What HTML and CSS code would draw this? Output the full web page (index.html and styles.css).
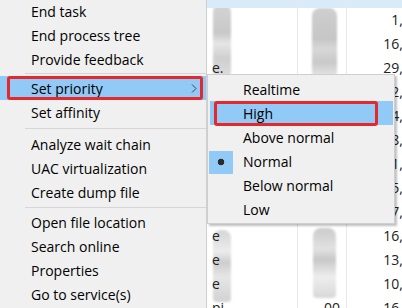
FILE: index.html
```html
<!DOCTYPE html>
<html lang="en">
<head>
  <meta charset="UTF-8"/>
  <title>Task Manager - Set priority</title>
  <link rel="stylesheet" href="styles.css">
</head>
<body>
  <div class="screen">

    <div class="smudge top-a"></div>
    <div class="smudge top-b"></div>
    <div class="smudge bot-a"></div>
    <div class="smudge bot-b"></div>

    <div class="table">
      <div class="row selected"><div></div><div class="name"></div><div class="cell"></div><div class="cell num"></div></div>
      <div class="row"><div></div><div class="name"></div><div class="cell"></div><div class="cell num">1,</div></div>
      <div class="row"><div></div><div class="name"></div><div class="cell"></div><div class="cell num">16,</div></div>
      <div class="row"><div></div><div class="name">e.</div><div class="cell"></div><div class="cell num">29,</div></div>
      <div class="row"><div></div><div class="name"></div><div class="cell"></div><div class="cell num">12,</div></div>
      <div class="row"><div></div><div class="name"></div><div class="cell"></div><div class="cell num">14,</div></div>
      <div class="row"><div></div><div class="name"></div><div class="cell"></div><div class="cell num">18,</div></div>
      <div class="row"><div></div><div class="name"></div><div class="cell"></div><div class="cell num">11,</div></div>
      <div class="row"><div></div><div class="name"></div><div class="cell"></div><div class="cell num">15,</div></div>
      <div class="row"><div></div><div class="name"></div><div class="cell"></div><div class="cell num">17,</div></div>
      <div class="row"><div></div><div class="name">e</div><div class="cell"></div><div class="cell num">16,</div></div>
      <div class="row"><div></div><div class="name">e</div><div class="cell"></div><div class="cell num">13,</div></div>
      <div class="row"><div></div><div class="name">e</div><div class="cell"></div><div class="cell num">10,</div></div>
      <div class="row"><div></div><div class="name">pi</div><div class="cell">00</div><div class="cell num">16,</div></div>
    </div>

    <ul class="menu main">
      <li class="item">End task</li>
      <li class="item">End process tree</li>
      <li class="item">Provide feedback</li>
      <li class="sep sep-1"></li>
      <li class="item active mark">Set priority
        <svg class="arrow" width="6" height="9" viewBox="0 0 6 9"><polyline points="1,0.5 5,4.5 1,8.5" fill="none" stroke="#444" stroke-width="1"/></svg>
      </li>
      <li class="item">Set affinity</li>
      <li class="sep sep-2"></li>
      <li class="item">Analyze wait chain</li>
      <li class="item">UAC virtualization</li>
      <li class="item">Create dump file</li>
      <li class="sep sep-3"></li>
      <li class="item">Open file location</li>
      <li class="item">Search online</li>
      <li class="item">Properties</li>
      <li class="item">Go to service(s)</li>
    </ul>

    <ul class="menu sub">
      <li class="item">Realtime</li>
      <li class="item active mark">High</li>
      <li class="item">Above normal</li>
      <li class="item checked">Normal</li>
      <li class="item">Below normal</li>
      <li class="item">Low</li>
    </ul>

  </div>
</body>
</html>
```

FILE: styles.css
```css
body {
  margin: 0;
  font-family: 'Open Sans', 'Noto Sans', sans-serif;
  font-size: 14px;
  color: #000;
}
.screen {
  position: relative;
  width: 402px;
  height: 308px;
  overflow: hidden;
  background: #fff;
}

/* table behind the menus */
.table {
  position: relative;
  margin-top: -16px;
}
.row {
  display: grid;
  grid-template-columns: 210px 87px 49px 56px;
  height: 24px;
  line-height: 24px;
}
.row.selected {
  background: #d9ebf9;
}
.name {
  padding-left: 2px;
  color: #222;
}
.cell {
  border-left: 1px solid #e8e8e8;
  text-align: right;
  padding-right: 6px;
  color: #222;
}
.num {
  padding-right: 0;
  margin-right: -1px;
}

.smudge {
  position: absolute;
  border-radius: 8px 8px 4px 4px;
  filter: blur(1px);
}
.top-a {
  left: 213px; top: 4px; width: 18px; height: 72px;
  background: linear-gradient(#d4d4d4, #c8c8c8 40%, #e6e6e6 55%, #cfcfcf 75%, #dcdcdc);
}
.top-b {
  left: 312px; top: 8px; width: 25px; height: 68px;
  background: linear-gradient(#cfcfcf, #c6c6c6 45%, #d8d8d8 60%, #c9c9c9 80%, #e4e4e4);
}
.bot-a {
  left: 213px; top: 230px; width: 18px; height: 72px;
  background: linear-gradient(#d6d6d6, #ececec 30%, #cdcdcd 45%, #e6e6e6 65%, #d2d2d2);
}
.bot-b {
  left: 313px; top: 228px; width: 23px; height: 70px;
  background: linear-gradient(#cbcbcb, #e2e2e2 30%, #c8c8c8 45%, #eeeeee 70%, #d8d8d8);
}

/* context menus */
.menu {
  position: absolute;
  margin: 0;
  padding: 0;
  list-style: none;
  background: #f0f0f0;
}
.main {
  left: 0;
  top: -1px;
  width: 206px;
  padding-bottom: 6px;
  border-right: 1px solid #cfcfcf;
}
.item {
  position: relative;
  height: 23px;
  padding-top: 1px;
  line-height: 24px;
  padding-left: 31px;
  white-space: nowrap;
}
.item.active {
  background: #91c9f7;
}
.sep {
  display: flex;
  align-items: center;
}
.sep::before {
  content: "";
  flex: 1;
  height: 1px;
  margin-left: 25px;
  background: #d6d6d6;
}
.sep-1 { height: 5px; }
.sep-2 { height: 8px; }
.sep-3 { height: 6px; }
.arrow {
  position: absolute;
  right: 9px;
  top: 8px;
}
.mark::after {
  content: "";
  position: absolute;
  left: 7px;
  right: 3px;
  top: 0;
  bottom: 0;
  border: 3px solid #e3292b;
  border-radius: 3px;
}

.sub {
  left: 207px;
  top: 74px;
  width: 186px;
  padding: 2px 0;
  border: 1px solid #cfcfcf;
  box-shadow: 2px 2px 2px rgba(0, 0, 0, 0.25);
}
.sub .item {
  padding-left: 35px;
}
.sub .item.active {
  margin: 0 1px 0 2px;
  padding-left: 33px;
}
.sub .mark::after {
  left: 4px;
  right: 15px;
  top: 0;
  bottom: -1px;
}
.checked::before {
  content: "";
  position: absolute;
  left: 1px;
  top: 2px;
  width: 24px;
  height: 23px;
  background: #91c9f7 radial-gradient(circle at 12px 11px, #2b2b2b 3px, transparent 3.6px);
}
```
